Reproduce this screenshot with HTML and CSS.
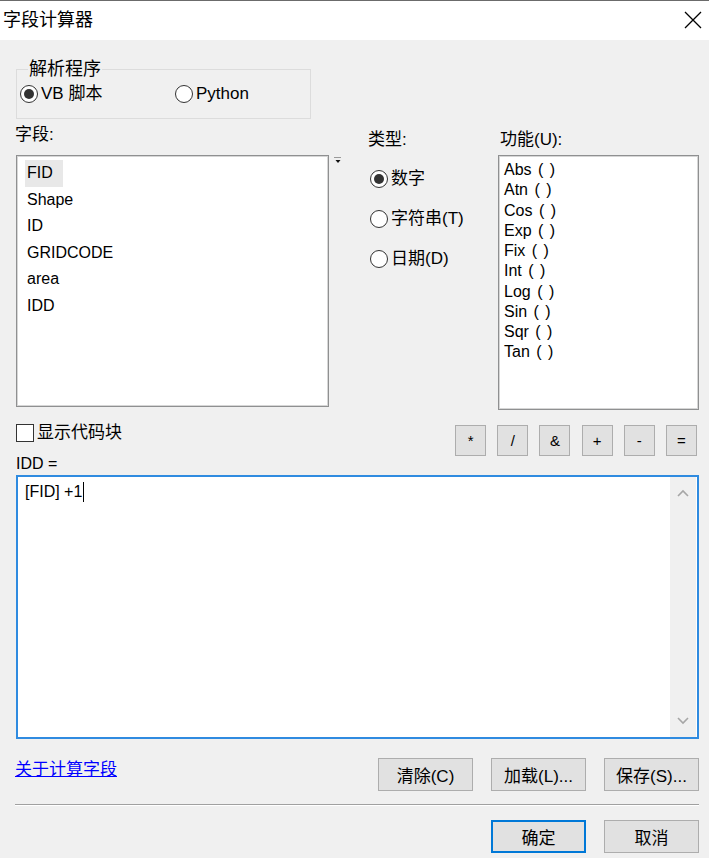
FILE: index.html
```html
<!DOCTYPE html>
<html lang="zh-CN">
<head>
<meta charset="utf-8">
<title>字段计算器</title>
<link rel="stylesheet" href="styles.css">
</head>
<body>
<div class="window">
  <div class="titlebar">
    <span class="title">字段计算器</span>
    <svg class="close" width="18" height="18" viewBox="0 0 18 18"><path d="M1 1 L17 17 M17 1 L1 17" stroke="#000" stroke-width="1.3" fill="none"/></svg>
  </div>
  <div class="body">
    <fieldset class="parser">
      <legend>解析程序</legend>
      <div class="parser-row">
        <label class="opt opt-vb"><span class="radio on"></span>VB 脚本</label>
        <label class="opt"><span class="radio"></span>Python</label>
      </div>
    </fieldset>

    <div class="main">
      <div class="col-fields">
        <div class="lbl">字段:</div>
        <div class="fields-wrap">
          <div class="listbox fields">
            <span class="item sel">FID</span>
            <span class="item">Shape</span>
            <span class="item">ID</span>
            <span class="item">GRIDCODE</span>
            <span class="item">area</span>
            <span class="item">IDD</span>
          </div>
          <svg class="sort" width="8" height="8" viewBox="0 0 8 8"><path d="M0 0.5 H7" stroke="#9a9a9a" stroke-width="1"/><path d="M1.5 3 H6.5 L4 6 Z" fill="#111"/></svg>
        </div>
      </div>
      <div class="col-types">
        <div class="lbl lbl-low">类型:</div>
        <div class="types">
          <label class="opt"><span class="radio on"></span>数字</label>
          <label class="opt"><span class="radio"></span>字符串(T)</label>
          <label class="opt"><span class="radio"></span>日期(D)</label>
        </div>
      </div>
      <div class="col-funcs">
        <div class="lbl lbl-low lbl-funcs">功能(U):</div>
        <div class="listbox funcs">
          <span class="fn">Abs ( )</span>
          <span class="fn">Atn ( )</span>
          <span class="fn">Cos ( )</span>
          <span class="fn">Exp ( )</span>
          <span class="fn">Fix ( )</span>
          <span class="fn">Int ( )</span>
          <span class="fn">Log ( )</span>
          <span class="fn">Sin ( )</span>
          <span class="fn">Sqr ( )</span>
          <span class="fn">Tan ( )</span>
        </div>
      </div>
    </div>

    <div class="toolrow">
      <div class="toolleft">
        <label class="opt check-opt"><span class="checkbox"></span>显示代码块</label>
        <div class="expr-lbl">IDD =</div>
      </div>
      <div class="ops">
        <button class="op">*</button>
        <button class="op">/</button>
        <button class="op">&amp;</button>
        <button class="op">+</button>
        <button class="op">-</button>
        <button class="op">=</button>
      </div>
    </div>

    <div class="expr">
      <div class="expr-text">[FID] +1<span class="caret"></span></div>
      <div class="scrollbar">
        <svg width="12" height="8" viewBox="0 0 12 8"><path d="M1 7 L6 2 L11 7" stroke="#a6a6a6" stroke-width="1.6" fill="none"/></svg>
        <svg width="12" height="8" viewBox="0 0 12 8"><path d="M1 1 L6 6 L11 1" stroke="#a6a6a6" stroke-width="1.6" fill="none"/></svg>
      </div>
    </div>

    <div class="actionrow">
      <a class="link" href="#">关于计算字段</a>
      <div class="btns">
        <button class="btn">清除(C)</button>
        <button class="btn">加载(L)...</button>
        <button class="btn">保存(S)...</button>
      </div>
    </div>

    <div class="sep"></div>

    <div class="okrow">
      <button class="btn default">确定</button>
      <button class="btn">取消</button>
    </div>
  </div>
</div>
</body>
</html>
```

FILE: styles.css
```css
* { box-sizing: border-box; }

html, body {
  margin: 0;
  padding: 0;
  background: #f0f0f0;
}

body {
  font-family: "Liberation Sans", "Noto Sans CJK SC", sans-serif;
  font-size: 17px;
  color: #000;
}

.window {
  width: 709px;
  height: 858px;
  overflow: hidden;
  background: #f0f0f0;
}

.titlebar {
  height: 40px;
  background: #fff;
  border-top: 1px solid #6b6b6b;
  display: flex;
  align-items: center;
  justify-content: space-between;
  padding: 0 7px 2px 3px;
}

.title {
  font-size: 18px;
  line-height: 24px;
}

.close { display: block; }

.body {
  padding: 0 10px 0 15px;
}

/* parser group */
.parser {
  margin: 17px 0 0 1px;
  width: 295px;
  border: 1px solid #dcdcdc;
  padding: 0 3px 12px 3px;
}

.parser legend {
  margin-left: 8px;
  padding: 0 1px;
  font-size: 18px;
  line-height: 24px;
}

.parser-row {
  display: flex;
  height: 24px;
  align-items: center;
  margin-top: 1px;
}

.opt {
  display: flex;
  align-items: center;
  height: 24px;
  line-height: 24px;
  white-space: nowrap;
}

.opt-vb { width: 155px; }

.radio {
  width: 18px;
  height: 18px;
  border: 1px solid #333;
  border-radius: 50%;
  background: #fff;
  margin-right: 3px;
  display: flex;
  align-items: center;
  justify-content: center;
  flex: none;
}

.radio.on::after {
  content: "";
  width: 10px;
  height: 10px;
  border-radius: 50%;
  background: #333;
}

/* main three columns */
.main {
  display: grid;
  grid-template-columns: 353px 130px 201px;
  margin-top: 4px;
}

.lbl {
  line-height: 24px;
  height: 24px;
}

.lbl-low { margin-top: 5px; }
.lbl-funcs { padding-left: 2px; }

.fields-wrap {
  display: flex;
  align-items: flex-start;
  margin-top: 8px;
  margin-left: 1px;
}

.listbox {
  background: #fff;
  border: 1px solid #8f9091;
  box-shadow: inset 0 0 0 1px #d6d6d6;
  display: flex;
  flex-direction: column;
  align-items: flex-start;
}

.fields {
  width: 313px;
  height: 252px;
  padding: 4px 0 0 8px;
}

.item {
  height: 26.6px;
  line-height: 26px;
  padding: 0 5px 0 2px;
  font-size: 16px;
}

.item.sel {
  background: #e8e8e8;
  padding-right: 10px;
}

.sort {
  margin: 2px 0 0 5px;
  display: block;
}

.types {
  margin-top: 15px;
  display: flex;
  flex-direction: column;
  gap: 16px;
  padding-left: 2px;
}

.funcs {
  margin-top: 3px;
  width: 201px;
  height: 255px;
  padding: 4px 0 0 5px;
}

.fn {
  height: 20.25px;
  line-height: 20px;
  font-size: 16px;
  word-spacing: 2px;
}

/* tool row */
.toolrow {
  display: flex;
  justify-content: space-between;
  align-items: flex-start;
}

.check-opt { margin-top: 11px; margin-left: 1px; }

.checkbox {
  width: 18px;
  height: 18px;
  border: 1px solid #333;
  background: #fff;
  margin-right: 3px;
  flex: none;
}

.expr-lbl {
  margin-top: 9px;
  margin-left: 1px;
  line-height: 20px;
  height: 20px;
  font-size: 16px;
}

.ops {
  display: flex;
  gap: 11.2px;
  margin-top: 15px;
  margin-right: 2px;
}

.op {
  width: 31px;
  height: 31px;
  padding: 0;
  background: #e1e1e1;
  border: 1px solid #adadad;
  font-family: "Liberation Sans", sans-serif;
  font-size: 15px;
  color: #000;
}

/* expression */
.expr {
  margin: 1px 0 0 1px;
  width: 683px;
  height: 264px;
  background: #fff;
  border: 2px solid #2f8be0;
  display: flex;
  justify-content: space-between;
}

.expr-text {
  padding: 4px 0 0 7px;
  line-height: 22px;
  font-size: 16px;
  display: flex;
  align-items: center;
  height: 26px;
}

.caret {
  display: inline-block;
  width: 1px;
  height: 20px;
  background: #000;
  margin-left: 1px;
}

.scrollbar {
  width: 26px;
  background: #f0f0f0;
  margin: 0 1px 0 0;
  display: flex;
  flex-direction: column;
  justify-content: space-between;
  align-items: center;
  padding: 12px 0 12px;
}

.scrollbar svg { display: block; }

/* action row */
.actionrow {
  margin-top: 19px;
  display: flex;
  justify-content: space-between;
  align-items: flex-start;
}

.link {
  color: #0000ff;
  text-decoration: underline;
  line-height: 20px;
  margin-top: 2px;
}

.btns, .okrow {
  display: flex;
  gap: 18px;
}

.btn {
  width: 95px;
  height: 33px;
  padding: 0;
  background: #e1e1e1;
  border: 1px solid #adadad;
  font-family: "Liberation Sans", "Noto Sans CJK SC", sans-serif;
  font-size: 17px;
  color: #000;
}

.btn.default {
  border: 2px solid #0078d7;
}

.sep {
  margin-top: 13px;
  height: 2px;
  border-top: 1px solid #a0a0a0;
  border-bottom: 1px solid #fff;
  width: 684px;
}

.okrow {
  margin-top: 14px;
  justify-content: flex-end;
}
```
